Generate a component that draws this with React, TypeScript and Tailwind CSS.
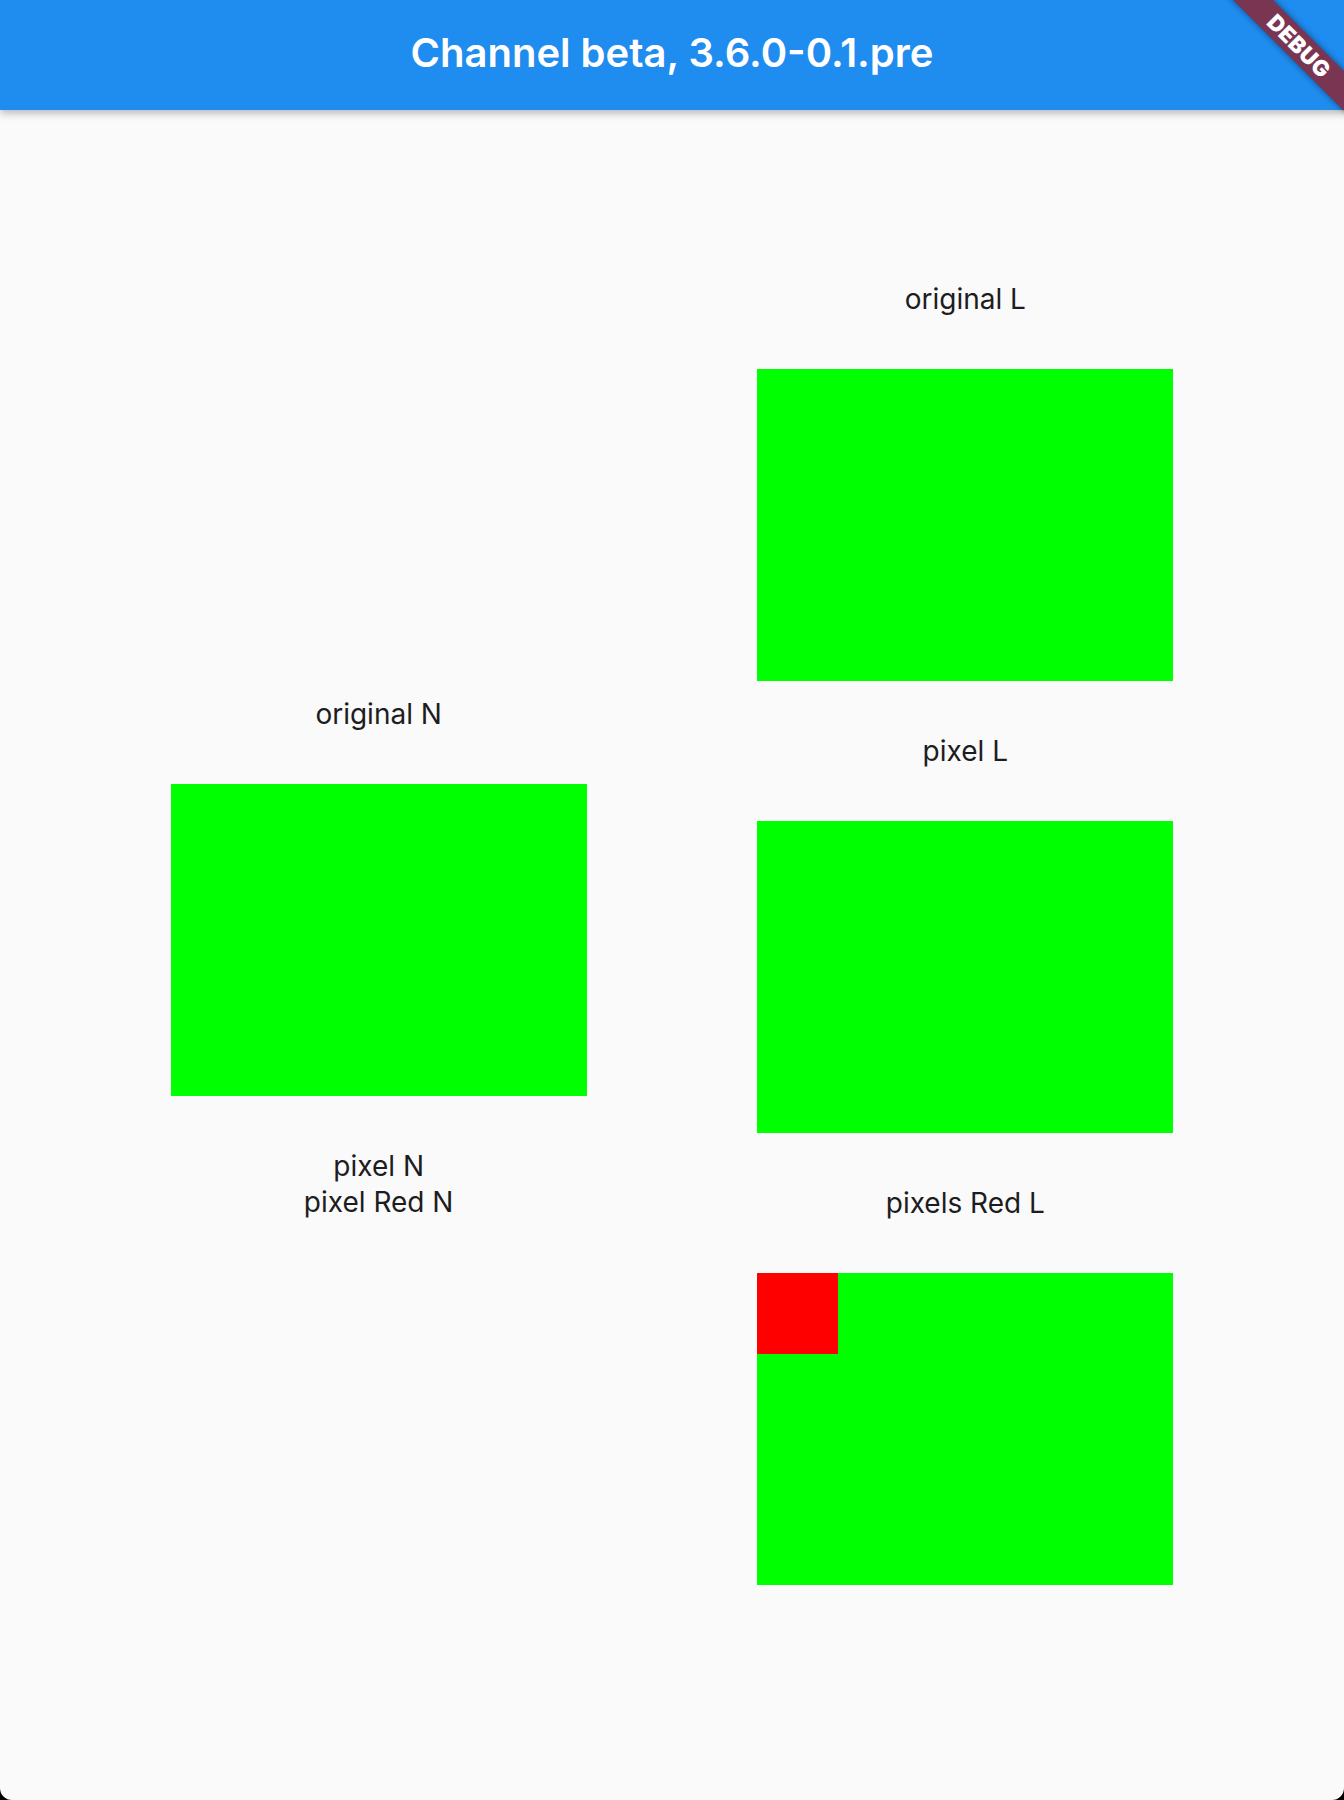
export default function App() {
  return (
    <div className="h-[1800px] w-[1344px] overflow-hidden bg-black font-['Inter',sans-serif]">
      <div className="relative flex h-full flex-col overflow-hidden rounded-b-[12px] bg-[#fafafa]">
        <header className="relative z-10 flex h-[110px] shrink-0 items-center justify-center bg-[#1f8cef] pb-[4px] shadow-[0_3px_8px_rgba(0,0,0,0.28)]">
          <h1 className="text-[40px] font-semibold leading-none text-white">Channel beta, 3.6.0-0.1.pre</h1>
        </header>

        <main className="flex flex-1 items-center justify-evenly text-[28px] leading-[36px] text-[#1d1d1f]">
          <div className="flex w-[416px] flex-col items-center pt-[6px]">
            <p className="py-[52px] text-center">original N</p>
            <div className="h-[312px] w-[416px] bg-[#00ff00]" />
            <p className="py-[52px] text-center">
              pixel N
              <br />
              pixel Red N
            </p>
          </div>

          <div className="flex w-[416px] flex-col items-center pb-[96px]">
            <p className="py-[52px] text-center">original L</p>
            <div className="h-[312px] w-[416px] bg-[#00ff00]" />
            <p className="py-[52px] text-center">pixel L</p>
            <div className="h-[312px] w-[416px] bg-[#00ff00]" />
            <p className="py-[52px] text-center">pixels Red L</p>
            <div className="h-[312px] w-[416px] bg-[#00ff00]">
              <div className="h-[81px] w-[81px] bg-[#ff0000]" />
            </div>
          </div>
        </main>

        {/* debug banner */}
        <div className="absolute left-[1214px] top-[32px] z-20 flex h-[28px] w-[170px] rotate-45 items-center justify-center bg-[#7a3552] shadow-[0_0_6px_rgba(0,0,0,0.5)]">
          <span className="text-[22px] font-black leading-none tracking-[0.5px] text-white">DEBUG</span>
        </div>
      </div>
    </div>
  );
}
